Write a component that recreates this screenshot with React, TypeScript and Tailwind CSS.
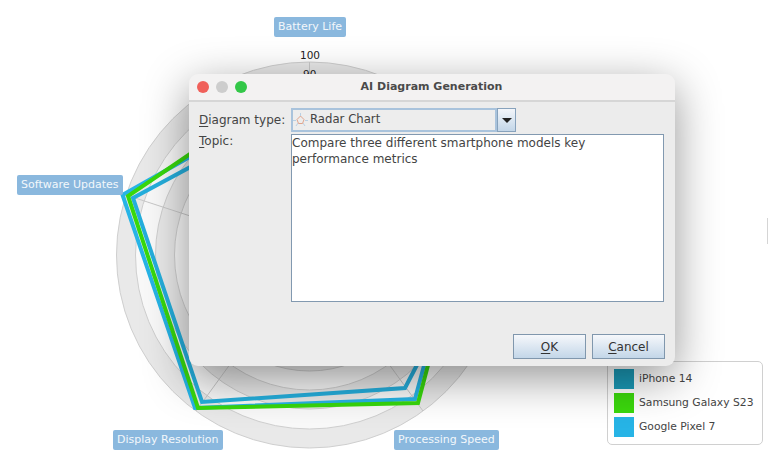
const font = "font-['DejaVu_Sans',sans-serif]";

const rings = [
  { r: 193, fill: '#e9e9e9' },
  { r: 174, fill: '#f9f9f9' },
  { r: 154, fill: '#e9e9e9' },
  { r: 135, fill: '#f9f9f9' },
  { r: 116, fill: '#e9e9e9' },
  { r: 97, fill: '#f9f9f9' },
  { r: 77, fill: '#e9e9e9' },
  { r: 58, fill: '#f9f9f9' },
  { r: 39, fill: '#e9e9e9' },
  { r: 19, fill: '#f9f9f9' },
];

const spokes = ['309.5,62', '126,195', '196,411', '423,411', '493,195'];

// values sit behind the dialog on the top and right axes
const series = [
  { color: '#25aedc', points: '309,103 133,198 202,402 405,388 500,205' },
  { color: '#27b4e6', points: '280,106 122.5,195 195,408 415,399 470,195' },
  { color: '#38d80c', points: '280,93 128,196 198,408 418,403 473,195' },
];

function RadarChart() {
  return (
    <svg width="768" height="465" viewBox="0 0 768 465" className="absolute left-0 top-0">
      {rings.map((ring) => (
        <circle key={ring.r} cx="309.5" cy="255" r={ring.r} fill={ring.fill} stroke="#cfcfcf" strokeWidth="1" />
      ))}
      {spokes.map((p) => {
        const [x, y] = p.split(',');
        return <line key={p} x1="309.5" y1="255" x2={x} y2={y} stroke="#c8c8c8" strokeWidth="1" />;
      })}
      {series.map((s) => (
        <polygon key={s.color} points={s.points} fill="none" stroke={s.color} strokeWidth="4" strokeLinejoin="miter" />
      ))}
    </svg>
  );
}

function AxisLabel({ text, className }: { text: string; className: string }) {
  return (
    <div className={`absolute h-5 rounded-[2px] bg-[#8ab8de] px-[4px] text-[11px] leading-5 text-[#f2f7fb] whitespace-nowrap ${className}`}>
      {text}
    </div>
  );
}

function Legend() {
  const items = [
    { name: 'iPhone 14', color: 'bg-[#1b9bb8]' },
    { name: 'Samsung Galaxy S23', color: 'bg-[#3bd80d]' },
    { name: 'Google Pixel 7', color: 'bg-[#27b4e6]' },
  ];
  return (
    <div className="absolute left-[607px] top-[361px] flex h-[84px] w-[156px] flex-col gap-[4px] rounded-[5px] border border-[#d0d0d0] bg-white pl-[6px] pt-[7px]">
      {items.map((item) => (
        <div key={item.name} className="flex h-5 items-center gap-[5px]">
          <div className={`h-5 w-5 ${item.color}`} />
          <span className="text-[10.75px] text-[#444] whitespace-nowrap">{item.name}</span>
        </div>
      ))}
    </div>
  );
}

function RadarIcon() {
  return (
    <svg width="16" height="16" viewBox="0 0 16 16" fill="none" className="shrink-0">
      <path d="M0 8.5h3M12 8.5h3M7.5 1v3M3 14l2-3M12 14l-2-3" stroke="#b9d0e4" strokeWidth="1" />
      <path d="M7.5 4l3.5 3.5-1.5 4h-4L4 7.5z" stroke="#e0a48c" strokeWidth="1" />
    </svg>
  );
}

function DialogButton({ label, rest }: { label: string; rest: string }) {
  return (
    <button className="flex h-[25px] w-[73px] items-center justify-center border border-[#8097ad] bg-gradient-to-b from-[#f6f8fb] to-[#c3d6e8] text-[12px] text-[#333]">
      <span className="underline underline-offset-2">{label}</span>
      {rest}
    </button>
  );
}

function Dialog() {
  return (
    <div className="absolute left-[189px] top-[74px] flex h-[292px] w-[486px] flex-col rounded-[9px] bg-[#ececec] shadow-[0_12px_45px_rgba(0,0,0,0.42)]">
      <div className="flex h-[28px] shrink-0 items-center rounded-t-[9px] border-b-2 border-[#d6d6d6] bg-[#f3f2f2] pl-[8px] pr-[9px]">
        <div className="flex gap-[7px]">
          <div className="h-3 w-3 rounded-full bg-[#f0605a]" />
          <div className="h-3 w-3 rounded-full bg-[#cdcdcd]" />
          <div className="h-3 w-3 rounded-full bg-[#33c748]" />
        </div>
        <div className="flex-1 pr-[50px] text-center text-[11px] font-bold text-[#4a4a4a]">AI Diagram Generation</div>
      </div>
      <div className="flex flex-1 flex-col px-[10px] pt-[6px]">
        <div className="flex items-center">
          <div className="w-[92px] text-[12px] text-[#444]">
            <span className="underline underline-offset-2">D</span>iagram type:
          </div>
          <div className="flex h-[24px] w-[206px] items-center gap-[1px] border-2 border-[#a9c3dc] bg-[#ededed] text-[11.7px] text-[#444]">
            <RadarIcon />
            Radar Chart
          </div>
          <div className="flex h-[24px] w-[19px] items-center justify-center border border-[#87a2bc] bg-gradient-to-b from-[#f3f6fa] to-[#c3d6e8]">
            <div className="h-0 w-0 border-x-[5px] border-t-[5px] border-x-transparent border-t-[#222]" />
          </div>
        </div>
        <div className="mt-[2px] flex">
          <div className="-mt-[1px] w-[92px] text-[12px] leading-[17px] text-[#444]">
            <span className="underline underline-offset-2">T</span>opic:
          </div>
          <div className="h-[168px] w-[373px] border border-[#8299b0] bg-white text-[12px] leading-[16px] text-[#444]">
            Compare three different smartphone models key
            <br />
            performance metrics
          </div>
        </div>
        <div className="mt-[32px] flex justify-end gap-[6px]">
          <DialogButton label="O" rest="K" />
          <DialogButton label="C" rest="ancel" />
        </div>
      </div>
    </div>
  );
}

export default function App() {
  return (
    <div className={`relative h-[465px] w-[768px] overflow-hidden bg-white ${font}`}>
      <RadarChart />
      <AxisLabel text="Battery Life" className="left-[274px] top-[17px]" />
      <AxisLabel text="Software Updates" className="left-[17px] top-[175px]" />
      <AxisLabel text="Display Resolution" className="left-[113px] top-[430px]" />
      <AxisLabel text="Processing Speed" className="left-[394px] top-[430px]" />
      <div className="absolute left-[300px] top-[48px] text-[10.5px] leading-[14px] text-[#222]">100</div>
      <div className="absolute left-[303px] top-[67px] text-[10.5px] leading-[14px] text-[#222]">90</div>
      <Legend />
      <Dialog />
      <div className="absolute left-[767px] top-[218px] h-[26px] w-px bg-[#d5d5d5]" />
    </div>
  );
}
